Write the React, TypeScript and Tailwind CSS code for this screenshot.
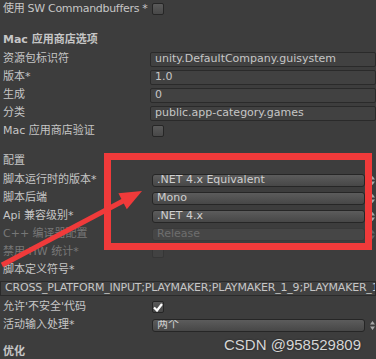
import React from 'react'

const FONT = { fontFamily: '"DejaVu Sans", "Noto Sans CJK SC", sans-serif' }

function Label({ text, dim, bold, tight }: { text: string; dim?: boolean; bold?: boolean; tight?: boolean }) {
  return (
    <div className={`w-[150px] shrink-0 pl-[3px] whitespace-nowrap text-[11px] ${tight ? 'tracking-[-0.3px]' : ''} ${bold ? 'font-bold' : ''} ${dim ? 'text-[#777777]' : 'text-[#c6c6c6]'}`}>
      {text}
    </div>
  )
}

function Row({ children }: { children: React.ReactNode }) {
  return <div className="h-[18px] flex items-center">{children}</div>
}

function Field({ value }: { value: string }) {
  return (
    <div className="flex-1 h-[15px] flex items-center px-[4px] bg-[#414141] border border-[#2a2a2a] rounded-[2px] text-[11px] text-[#c6c6c6] whitespace-nowrap overflow-hidden">
      {value}
    </div>
  )
}

function Arrows({ dim }: { dim?: boolean }) {
  return (
    <svg width="5" height="9" viewBox="0 0 5 9" className="shrink-0 mr-[1px]">
      <path d="M2.5 0 L5 3.5 L0 3.5 Z M2.5 9 L5 5.5 L0 5.5 Z" fill={dim ? '#666' : '#a8a8a8'} />
    </svg>
  )
}

function Dropdown({ value, dim }: { value: string; dim?: boolean }) {
  return (
    <div className="flex-1 flex items-center gap-[5px] ml-[2px]">
      <div className={`flex-1 h-[13px] flex items-center px-[4px] rounded-[3px] border text-[11px] whitespace-nowrap overflow-hidden ${dim ? 'bg-[#464646] border-[#3a3a3a] text-[#6e6e6e]' : 'bg-gradient-to-b from-[#5c5c5c] to-[#474747] border-[#262626] text-[#cfcfcf]'}`}>
        {value}
      </div>
      <Arrows dim={dim} />
    </div>
  )
}

function Checkbox({ checked, dim }: { checked?: boolean; dim?: boolean }) {
  return (
    <div className={`ml-[2px] w-[12px] h-[12px] rounded-[2px] border flex items-center justify-center ${dim ? 'bg-[#424242] border-[#363636]' : 'bg-gradient-to-b from-[#5a5a5a] to-[#484848] border-[#262626]'}`}>
      {checked && (
        <svg width="10" height="9" viewBox="0 0 10 9">
          <path d="M1 4.5 L4 7.5 L9 1" fill="none" stroke="#ffffff" strokeWidth="2.2" />
        </svg>
      )}
    </div>
  )
}

export default function App() {
  return (
    <div className="relative w-[376px] h-[359px] overflow-hidden bg-[#3d3d3d]" style={FONT}>
      <div className="flex flex-col">
        <Row><Label text="使用 SW Commandbuffers *" tight /><Checkbox /></Row>

        <div className="h-[13px]" />
        <Row><Label text="Mac 应用商店选项" bold /></Row>

        <div className="h-[1px]" />
        <Row><Label text="资源包标识符" /><Field value="unity.DefaultCompany.guisystem" /></Row>
        <Row><Label text="版本*" /><Field value="1.0" /></Row>
        <Row><Label text="生成" /><Field value="0" /></Row>
        <Row><Label text="分类" /><Field value="public.app-category.games" /></Row>
        <Row><Label text="Mac 应用商店验证" /><Checkbox /></Row>

        <div className="h-[12px]" />
        <Row><Label text="配置" /></Row>
        <div className="h-[1px]" />
        <Row><Label text="脚本运行时的版本*" /><Dropdown value=".NET 4.x Equivalent" /></Row>
        <Row><Label text="脚本后端" /><Dropdown value="Mono" /></Row>
        <Row><Label text="Api 兼容级别*" /><Dropdown value=".NET 4.x" /></Row>
        <Row><Label text="C++ 编译器配置" dim /><Dropdown value="Release" dim /></Row>
        <Row><Label text="禁用 HW 统计*" dim /><Checkbox dim /></Row>
        <Row><Label text="脚本定义符号*" /></Row>

        <div className="h-[2px]" />
        <div className="h-[15px] flex items-center px-[4px] bg-[#414141] border border-[#2a2a2a] text-[11px] tracking-[-0.2px] text-[#c6c6c6] whitespace-nowrap overflow-hidden">
          CROSS_PLATFORM_INPUT;PLAYMAKER;PLAYMAKER_1_9;PLAYMAKER_1_9_OR_NEWER
        </div>
        <div className="h-[2px]" />
        <Row><Label text="允许'不安全'代码" /><Checkbox checked /></Row>
        <Row><Label text="活动输入处理*" /><Dropdown value="两个" /></Row>

        <div className="h-[9px]" />
        <Row><Label text="优化" bold /></Row>
      </div>

      {/* annotation: red box + arrow */}
      <svg className="absolute inset-0 pointer-events-none" width="376" height="359" viewBox="0 0 376 359">
        <rect x="107.5" y="156.5" width="261" height="90" fill="none" stroke="#f03a3a" strokeWidth="7" />
        <line x1="2" y1="265" x2="124" y2="200.5" stroke="#f03a3a" strokeWidth="5" />
        <polygon points="142,191 126.8,209.3 118.4,193.3" fill="#f03a3a" />
      </svg>

      {/* watermark */}
      <div className="absolute left-[224px] top-[334px] text-[15px] text-[#d6d6d6] whitespace-nowrap" style={{ fontFamily: '"Liberation Sans", Arial, sans-serif', textShadow: '0 0 2px #222' }}>
        CSDN @958529809
      </div>
    </div>
  )
}
